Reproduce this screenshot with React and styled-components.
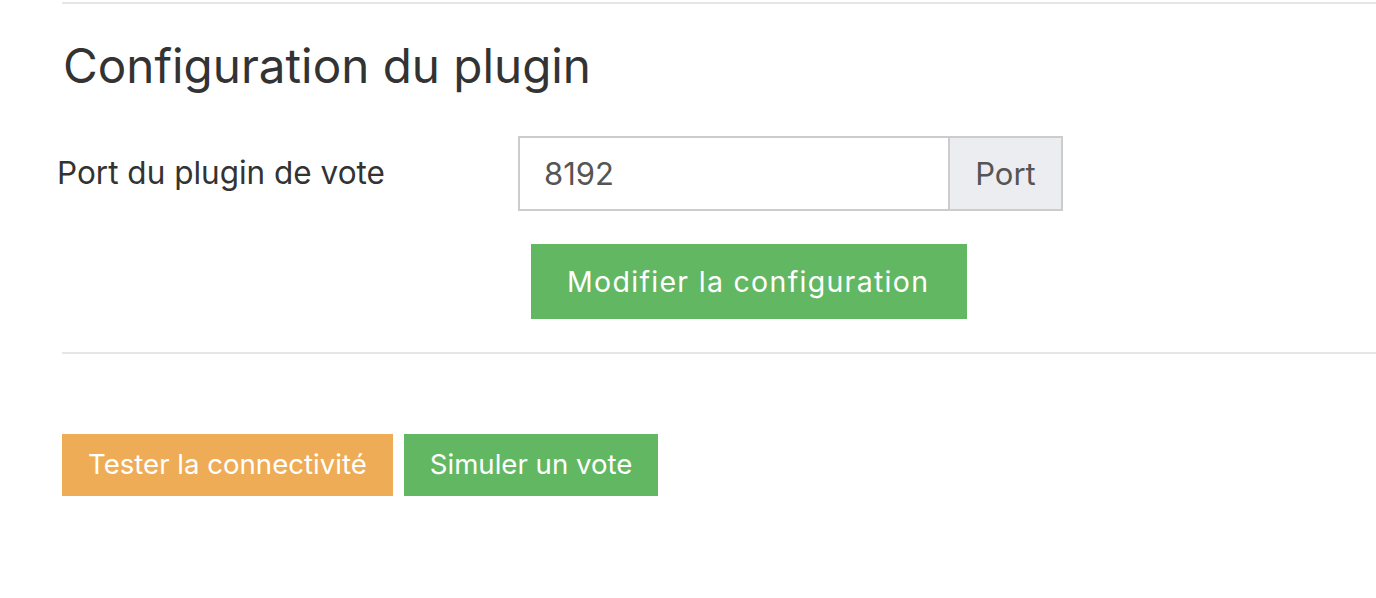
import React from "react";
import styled, { createGlobalStyle } from "styled-components";

const GlobalStyle = createGlobalStyle`
  html, body {
    margin: 0;
    padding: 0;
    background: #fff;
    font-family: Inter, "Liberation Sans", sans-serif;
  }
`;

const Page = styled.div`
  padding: 2px 0 0 62px;
`;

const Rule = styled.hr`
  margin: 0;
  border: 0;
  border-top: 2px solid #e6e6e6;
`;

const Title = styled.h3`
  margin: 34px 0 0 1px;
  font-size: 47.6px;
  font-weight: 400;
  line-height: 56px;
  color: #333;
`;

const Form = styled.form`
  margin: 42px 0 33px -5px;
`;

const Row = styled.div`
  display: flex;
  align-items: flex-start;
`;

const Label = styled.label`
  width: 461px;
  font-size: 31.5px;
  line-height: 40px;
  color: #333;
  padding-top: 17px;
`;

const InputGroup = styled.div`
  display: flex;
  height: 75px;
  box-sizing: border-box;
`;

const Input = styled.input`
  width: 430px;
  box-sizing: border-box;
  border: 2px solid #ccc;
  border-right: 0;
  padding: 0 24px;
  font-family: inherit;
  font-size: 31px;
  color: #555;
  outline: none;
  background: #fff;
`;

const Addon = styled.span`
  width: 115px;
  box-sizing: border-box;
  display: flex;
  align-items: center;
  justify-content: center;
  border: 2px solid #ccc;
  background: #ecedf0;
  font-size: 31px;
  color: #555;
`;

const Button = styled.button`
  border: 0;
  border-radius: 0;
  background: ${(p) => (p.warning ? "#efac56" : "#62b762")};
  color: #fff;
  font-family: inherit;
  font-size: ${(p) => (p.big ? "28.5px" : "27.6px")};
  letter-spacing: ${(p) => (p.big ? "1.3px" : "0")};
  height: ${(p) => (p.big ? "75px" : "62px")};
  padding: ${(p) => (p.big ? "0 38px 0 36px" : "0 26px 3px")};
  cursor: pointer;
`;

const SubmitRow = styled.div`
  margin: 33px 0 0 474px;
`;

const Actions = styled.div`
  display: flex;
  gap: 11px;
  margin-top: 80px;
`;

export default function App() {
  return (
    <Page>
      <GlobalStyle />
      <Rule />
      <Title>Configuration du plugin</Title>
      <Form onSubmit={(e) => e.preventDefault()}>
        <Row>
          <Label htmlFor="port">Port du plugin de vote</Label>
          <InputGroup>
            <Input id="port" defaultValue="8192" />
            <Addon>Port</Addon>
          </InputGroup>
        </Row>
        <SubmitRow>
          <Button big type="submit">Modifier la configuration</Button>
        </SubmitRow>
      </Form>
      <Rule />
      <Actions>
        <Button warning>Tester la connectivité</Button>
        <Button>Simuler un vote</Button>
      </Actions>
    </Page>
  );
}
